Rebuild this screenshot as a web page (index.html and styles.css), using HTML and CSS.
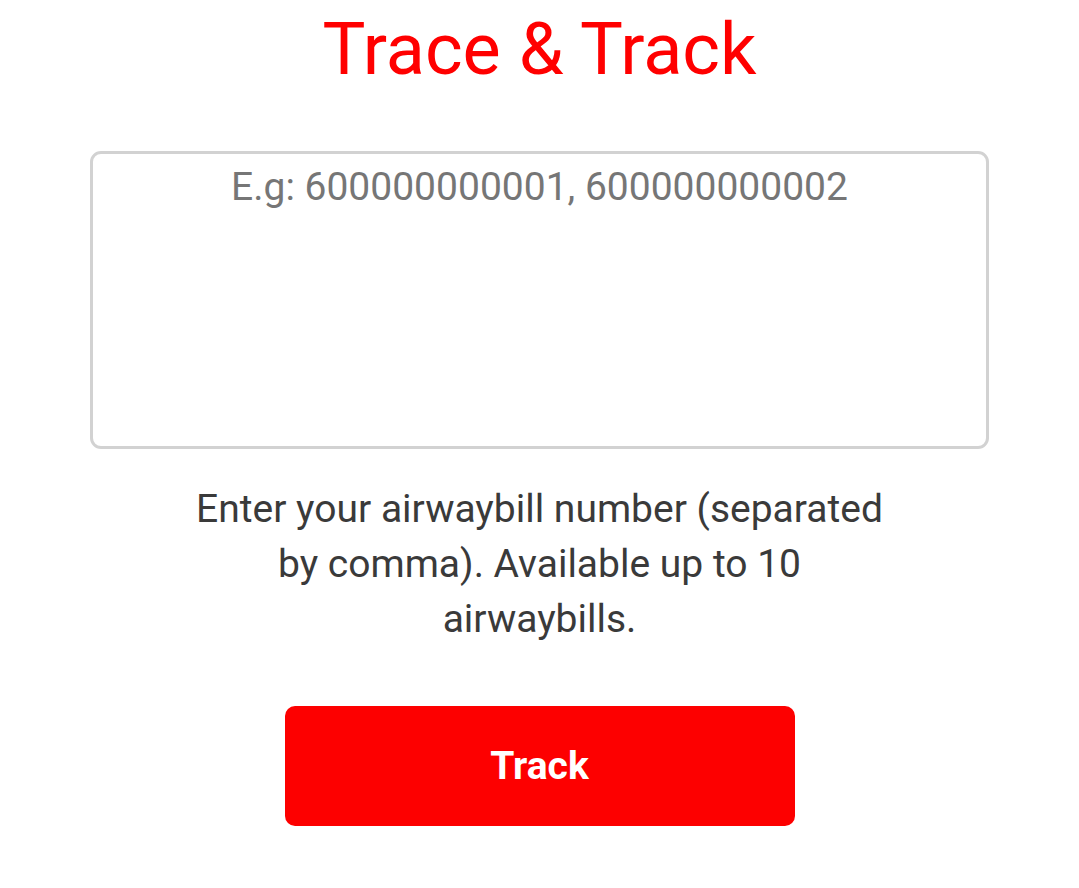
FILE: index.html
```html
<!DOCTYPE html>
<html lang="en">
<head>
  <meta charset="UTF-8" />
  <meta name="viewport" content="width=device-width, initial-scale=1.0"/>
  <title>Trace &amp; Track</title>
  <link rel="stylesheet" href="styles.css">
</head>
<body>
  <main class="tracker">
    <h1 class="tracker-title">Trace &amp; Track</h1>
    <form class="tracker-form">
      <textarea class="awb-input" name="awb" placeholder="E.g: 600000000001, 600000000002"></textarea>
      <p class="awb-hint">Enter your airwaybill number (separated by comma). Available up to 10 airwaybills.</p>
      <button type="submit" class="track-btn">Track</button>
    </form>
  </main>
</body>
</html>
```

FILE: styles.css
```css
body, html {
  margin: 0;
  padding: 0;
  background: #fff;
  font-family: Roboto, "Noto Sans", Arial, sans-serif;
}

.tracker {
  padding: 8px 90px 40px;
  text-align: center;
}

.tracker-title {
  margin: 0;
  font-size: 72px;
  line-height: 84px;
  font-weight: 400;
  color: #ff0000;
}

.tracker-form {
  display: flex;
  flex-direction: column;
  align-items: center;
  margin-top: 59px;
}

.awb-input {
  box-sizing: border-box;
  width: 100%;
  height: 298px;
  padding: 6px 16px;
  border: 3px solid #d2d2d2;
  border-radius: 11px;
  font-family: inherit;
  font-size: 39px;
  line-height: 55px;
  color: #333;
  text-align: center;
  resize: none;
  outline: none;
}

.awb-input::placeholder {
  color: #767676;
}

.awb-hint {
  max-width: 700px;
  margin: 33px 0 0;
  font-size: 39px;
  line-height: 55px;
  color: #3a3a3a;
}

.track-btn {
  width: 510px;
  height: 120px;
  margin-top: 59px;
  border: none;
  border-radius: 10px;
  background-color: #fd0000;
  color: white;
  font-family: inherit;
  font-size: 39px;
  font-weight: 700;
  cursor: pointer;
}
```
